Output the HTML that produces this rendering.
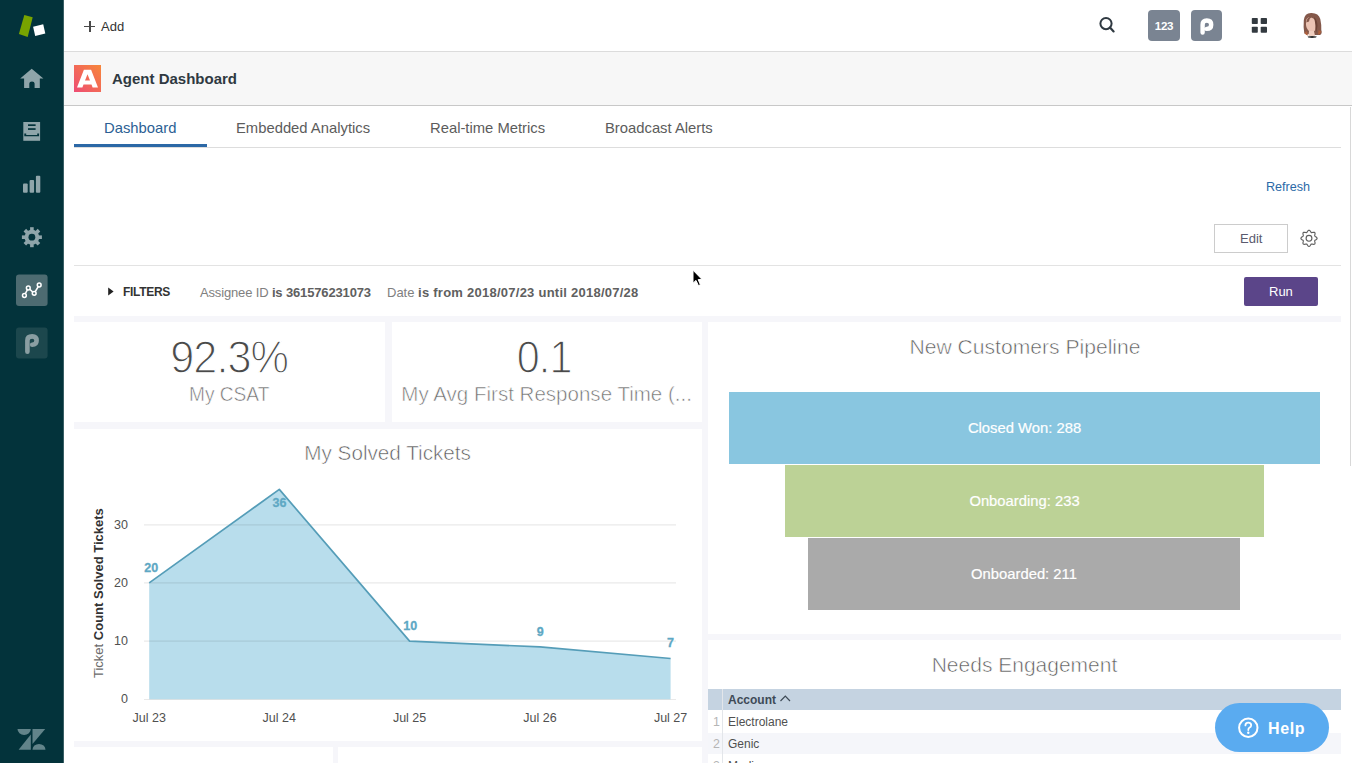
<!DOCTYPE html>
<html><head><meta charset="utf-8">
<style>
*{margin:0;padding:0;box-sizing:border-box}
html,body{width:1352px;height:763px;overflow:hidden;background:#fff;font-family:"Liberation Sans",sans-serif;position:relative}
.a{position:absolute;white-space:nowrap}
#side{left:0;top:0;width:64px;height:763px;background:#03333b}
#topbar{left:64px;top:0;width:1288px;height:52px;background:#fff;border-bottom:1px solid #dcdcdc}
#hdr{left:64px;top:52px;width:1288px;height:54px;background:#f7f7f7;border-bottom:1px solid #c8c8c8}
.tab{top:119.5px;font-size:14.8px;color:#5c5c5c}
.gap{background:#f6f6fa}
.tile{background:#fff}
.bl{font-size:14.8px;color:#fff;text-align:center;letter-spacing:0px;-webkit-text-stroke:0.2px #fff;margin-top:1px}
.ttl{font-size:21px;color:#777;text-align:center;-webkit-text-stroke:0.6px #fff}
.kpi{-webkit-text-stroke:1.3px #fff}
.ttl span,.kpi span{display:inline-block;transform-origin:50% 50%}
</style></head><body>
<!-- sidebar -->
<div id="side" class="a"></div><div class="a" style="left:63px;top:0;width:1px;height:763px;background:#3a5f65"></div>
<!-- sidebar icons -->
<svg class="a" style="left:0;top:0" width="64" height="400" viewBox="0 0 64 400">
 <polygon points="24.3,15.1 32.7,17.2 27.7,36.9 18.9,34" fill="#78a300"/>
 <polygon points="33.1,26.8 43.2,24.3 45.3,33.6 35.2,36.1" fill="#fff"/>
 <!-- home -->
 <path d="M31.7,68.8 L43.4,78.6 L39.8,78.6 L39.8,88 L34.6,88 L34.6,83.5 Q34.6,81.6 32,81.6 Q29.3,81.6 29.3,83.5 L29.3,88 L24.1,88 L24.1,78.6 L20.2,78.6 Z" fill="#8fa5aa"/>
 <!-- views -->
 <rect x="23.3" y="122" width="16.8" height="18.8" fill="#8fa5aa"/>
 <rect x="28" y="124.3" width="7.6" height="1.7" fill="#03333b"/>
 <rect x="28" y="128.2" width="7.6" height="1.7" fill="#03333b"/>
 <path d="M24.3,133.4 L26.2,133.4 L26.2,135 L37.2,135 L37.2,133.4 L39.1,133.4 L39.1,136.3 L24.3,136.3 Z" fill="#03333b"/>
 <!-- reports -->
 <rect x="23" y="183.4" width="4.7" height="9.4" rx="1" fill="#8fa5aa"/>
 <rect x="29.6" y="180" width="4.5" height="12.8" rx="1" fill="#8fa5aa"/>
 <rect x="35.9" y="175.8" width="4.4" height="17" rx="1" fill="#8fa5aa"/>
 <!-- gear -->
 <g transform="translate(31.9,237.2)" fill="#8fa5aa">
  <circle r="7.4"/>
  <g id="teeth"><rect x="-1.8" y="-10" width="3.6" height="4" /></g>
  <rect x="-1.8" y="-10" width="3.6" height="4" transform="rotate(45)"/>
  <rect x="-1.8" y="-10" width="3.6" height="4" transform="rotate(90)"/>
  <rect x="-1.8" y="-10" width="3.6" height="4" transform="rotate(135)"/>
  <rect x="-1.8" y="-10" width="3.6" height="4" transform="rotate(180)"/>
  <rect x="-1.8" y="-10" width="3.6" height="4" transform="rotate(225)"/>
  <rect x="-1.8" y="-10" width="3.6" height="4" transform="rotate(270)"/>
  <rect x="-1.8" y="-10" width="3.6" height="4" transform="rotate(315)"/>
  <circle r="3.4" fill="#03333b"/>
 </g>
 <!-- active analytics -->
 <rect x="16" y="274.5" width="31.6" height="31.5" rx="3" fill="#4d6b71"/>
 <polyline points="24.4,295.5 28.3,288 34.2,293.3 39.2,285" fill="none" stroke="#fff" stroke-width="1.6"/>
 <circle cx="24.4" cy="295.5" r="1.9" fill="#4d6b71" stroke="#fff" stroke-width="1.5"/>
 <circle cx="28.3" cy="288" r="1.9" fill="#4d6b71" stroke="#fff" stroke-width="1.5"/>
 <circle cx="34.2" cy="293.3" r="1.9" fill="#4d6b71" stroke="#fff" stroke-width="1.5"/>
 <circle cx="39.2" cy="285" r="1.9" fill="#4d6b71" stroke="#fff" stroke-width="1.5"/>
 <!-- P app -->
 <rect x="16" y="327.6" width="31.6" height="31" rx="3" fill="#1c474d"/>
 <path d="M27.4,351.8 L27.4,340.4 Q27.4,336.4 32.2,336.4 Q36.6,336.4 36.6,340.6 Q36.6,344.8 32.2,344.8" fill="none" stroke="#8a9ea2" stroke-width="4.6" stroke-linecap="round"/>
 <circle cx="31.8" cy="340.3" r="1.2" fill="#1c474d"/>
 
</svg>
<svg class="a" style="left:0;top:700px" width="64" height="63" viewBox="0 700 64 63">
 <g fill="#62848a">
  <path d="M17.5,729 L30.8,729 A6.65,6 0 0 1 17.5,729 Z"/>
  <path d="M18.6,749.7 L30.8,749.7 L30.8,734.6 Z"/>
  <path d="M32.5,729 L45.2,729 L32.5,744 Z"/>
  <path d="M32.5,749.7 L45.5,749.7 A6.5,5.8 0 0 0 32.5,749.7 Z"/>
 </g>
</svg>

<div id="topbar" class="a"></div>
<div id="hdr" class="a"></div>

<!-- Add -->
<div class="a" style="left:84.4px;top:25.8px;width:10.8px;height:1.5px;background:#4a4a4a"></div>
<div class="a" style="left:89px;top:21.2px;width:1.5px;height:10.6px;background:#4a4a4a"></div>
<div class="a" style="left:101px;top:18.5px;font-size:13px;color:#333">Add</div>

<!-- Agent Dashboard -->
<div class="a" style="left:74px;top:65px;width:27px;height:27px;background:linear-gradient(45deg,#ee4c74,#f7873a)"></div>
<div class="a" style="left:112px;top:70px;font-size:15px;font-weight:bold;color:#2f3941">Agent Dashboard</div>


<!-- A logo letter -->
<svg class="a" style="left:74px;top:65px" width="27" height="27" viewBox="0 0 27 27">
 <path d="M9.9,4.8 L17.1,4.8 L24,22.6 L18.6,22.6 L17.5,19.4 L9.5,19.4 L8.4,22.6 L3,22.6 Z M13.5,9.3 L11,15.6 L16,15.6 Z" fill="#fff" fill-rule="evenodd"/>
</svg>
<!-- top right icons -->
<svg class="a" style="left:1095px;top:14px" width="24" height="22" viewBox="0 0 24 22">
 <circle cx="11" cy="9.6" r="5.6" fill="none" stroke="#2f3941" stroke-width="2"/>
 <line x1="15" y1="13.6" x2="18.6" y2="17.4" stroke="#2f3941" stroke-width="2.2" stroke-linecap="round"/>
</svg>
<div class="a" style="left:1148px;top:10px;width:32px;height:31px;background:#7a8492;border-radius:4px"></div>
<div class="a" style="left:1148px;top:19px;width:32px;text-align:center;font-size:11.6px;font-weight:bold;color:#fff;letter-spacing:-0.3px">123</div>
<div class="a" style="left:1191px;top:10px;width:31px;height:31px;background:#7a8492;border-radius:4px"></div>
<svg class="a" style="left:1191px;top:10px" width="31" height="31" viewBox="0 0 31 31">
 <path d="M11.6,22.6 L11.6,14.8 Q11.6,10.5 15.8,10.5 Q20.2,10.5 20.2,14.7 Q20.2,18.9 15.8,18.9" fill="none" stroke="#fff" stroke-width="4.4" stroke-linecap="round"/>
 <circle cx="15.2" cy="14.4" r="1.1" fill="#7a8492"/>
</svg>
<svg class="a" style="left:1250px;top:16px" width="20" height="20" viewBox="0 0 20 20">
 <rect x="1.8" y="2" width="6" height="6" rx="0.8" fill="#333a40"/>
 <rect x="10.7" y="2" width="6.3" height="6" rx="0.8" fill="#333a40"/>
 <rect x="1.8" y="10.8" width="6" height="6" rx="0.8" fill="#333a40"/>
 <rect x="10.7" y="10.8" width="6.3" height="6" rx="0.8" fill="#333a40"/>
</svg>
<svg class="a" style="left:1296px;top:8px" width="34" height="34" viewBox="1296 8 34 34">
 <path d="M1304.3,33.5 Q1303.2,27 1303.8,20 Q1304.6,13 1311,12.9 Q1318.5,12.6 1320.3,19 Q1321.6,25 1321.3,30 Q1322.6,33.6 1320,35 L1313,35 Z" fill="#84584a"/>
 <path d="M1306,22 Q1306,17.4 1310,17.2 Q1314,17.6 1315.4,21 Q1316,27 1315,30.6 Q1312.6,32.6 1310.4,32 Q1306.4,29.6 1306,25 Z" fill="#ebc3b3"/>
 <path d="M1309,31 L1314,31 L1315,36 L1308.5,36 Z" fill="#f0cfc0"/>
 <path d="M1306.2,22.6 Q1307,16.2 1312,16.4 Q1309.6,18 1309,21.4 Z" fill="#84584a"/>
 <path d="M1314,17 Q1317.5,20 1317.5,26 L1316.2,33 Q1315.8,24 1314,17 Z" fill="#6d4336"/>
 <path d="M1307.6,36.4 Q1312,35.4 1316.8,36.4 L1316,37.6 Q1312,38.2 1308.2,37.6 Z" fill="#2b2b2b"/>
 <path d="M1304.4,33 Q1306,35.6 1308,35.4 L1307,31 Z M1318,34.6 Q1320.6,34.2 1321.2,31.5 L1318.6,30 Z" fill="#b0603d"/>
</svg>
<!-- gear outline -->
<svg class="a" style="left:1298px;top:227px" width="22" height="22" viewBox="0 0 22 22">
 <path d="M11.00,3.20 L11.52,3.34 L12.00,3.74 L12.39,4.29 L12.73,4.85 L13.03,5.31 L13.37,5.57 L13.80,5.63 L14.34,5.52 L14.97,5.35 L15.64,5.25 L16.26,5.31 L16.73,5.57 L16.99,6.04 L17.05,6.66 L16.95,7.33 L16.78,7.96 L16.67,8.50 L16.73,8.93 L16.99,9.27 L17.45,9.57 L18.01,9.91 L18.56,10.30 L18.96,10.78 L19.10,11.30 L18.96,11.82 L18.56,12.30 L18.01,12.69 L17.45,13.03 L16.99,13.33 L16.73,13.67 L16.67,14.10 L16.78,14.64 L16.95,15.27 L17.05,15.94 L16.99,16.56 L16.73,17.03 L16.26,17.29 L15.64,17.35 L14.97,17.25 L14.34,17.08 L13.80,16.97 L13.37,17.03 L13.03,17.29 L12.73,17.75 L12.39,18.31 L12.00,18.86 L11.52,19.26 L11.00,19.40 L10.48,19.26 L10.00,18.86 L9.61,18.31 L9.27,17.75 L8.97,17.29 L8.63,17.03 L8.20,16.97 L7.66,17.08 L7.03,17.25 L6.36,17.35 L5.74,17.29 L5.27,17.03 L5.01,16.56 L4.95,15.94 L5.05,15.27 L5.22,14.64 L5.33,14.10 L5.27,13.67 L5.01,13.33 L4.55,13.03 L3.99,12.69 L3.44,12.30 L3.04,11.82 L2.90,11.30 L3.04,10.78 L3.44,10.30 L3.99,9.91 L4.55,9.57 L5.01,9.27 L5.27,8.93 L5.33,8.50 L5.22,7.96 L5.05,7.33 L4.95,6.66 L5.01,6.04 L5.27,5.57 L5.74,5.31 L6.36,5.25 L7.03,5.35 L7.66,5.52 L8.20,5.63 L8.63,5.57 L8.97,5.31 L9.27,4.85 L9.61,4.29 L10.00,3.74 L10.48,3.34 Z" fill="none" stroke="#606060" stroke-width="1.15" stroke-linejoin="round"/>
 <circle cx="11" cy="11.3" r="2.9" fill="none" stroke="#606060" stroke-width="1.15"/>
</svg>
<!-- filters -->
<svg class="a" style="left:106px;top:286px" width="10" height="10" viewBox="0 0 10 10"><path d="M2.2,1.4 L7.6,5.4 L2.2,9.4 Z" fill="#222"/></svg>
<div class="a" style="left:123px;top:285px;font-size:12px;font-weight:bold;color:#333;letter-spacing:-0.3px">FILTERS</div>
<div class="a" style="left:200px;top:284.5px;font-size:13px;color:#808080;letter-spacing:-0.15px">Assignee ID <b style="color:#606060">is 361576231073</b></div>
<div class="a" style="left:387px;top:284.5px;font-size:13px;color:#808080">Date <b style="color:#606060;letter-spacing:0.25px">is from 2018/07/23 until 2018/07/28</b></div>
<!-- cursor -->
<svg class="a" style="left:690px;top:268px" width="16" height="22" viewBox="0 0 16 22">
 <path d="M3,2.2 L3,15.2 L6,12.4 L8.4,17.6 L10.4,16.8 L8.2,11.6 L12,11.4 Z" fill="#000" stroke="#fff" stroke-width="1"/>
</svg>

<div class="a" style="left:1350px;top:107px;width:1px;height:359px;background:#d8d8d8"></div>
<!-- tabs -->
<div class="a" style="left:74px;top:147px;width:1267px;height:1px;background:#ddd"></div>
<div class="a" style="left:74px;top:144px;width:133px;height:3px;background:#2c68a6"></div>
<div class="a tab" style="left:104px;color:#2c5f94">Dashboard</div>
<div class="a tab" style="left:236px">Embedded Analytics</div>
<div class="a tab" style="left:430px">Real-time Metrics</div>
<div class="a tab" style="left:605px">Broadcast Alerts</div>

<div class="a" style="left:1266px;top:180px;font-size:12.6px;color:#2c6aa8">Refresh</div>
<div class="a" style="left:1214px;top:224px;width:74px;height:29px;border:1px solid #ccc;background:#fff"></div>
<div class="a" style="left:1240px;top:231px;font-size:13px;color:#5a5a6e">Edit</div>

<div class="a" style="left:74px;top:265px;width:1267px;height:1px;background:#e3e3e3"></div>

<div class="a" style="left:1244px;top:277px;width:74px;height:29px;background:#5b4589;border-radius:2px"></div>
<div class="a" style="left:1269px;top:284px;font-size:13px;color:#fff">Run</div>

<!-- dashboard grid bg -->
<div class="a gap" style="left:74px;top:316px;width:1267px;height:447px"></div>
<div class="a tile" style="left:74px;top:322px;width:311px;height:100px"></div>
<div class="a tile" style="left:392px;top:322px;width:310px;height:100px"></div>
<div class="a tile" style="left:74px;top:429px;width:628px;height:312px"></div>
<div class="a tile" style="left:708px;top:322px;width:633px;height:312px"></div>
<div class="a tile" style="left:708px;top:640px;width:633px;height:123px"></div>
<div class="a tile" style="left:74px;top:747px;width:259px;height:16px"></div>
<div class="a tile" style="left:338px;top:747px;width:364px;height:16px"></div>


<!-- KPI -->
<div class="a kpi" style="left:74px;top:329px;width:311px;text-align:center;font-size:47px;color:#4a4a4a;letter-spacing:-1px"><span style="transform:scaleX(0.92)">92.3%</span></div>
<div class="a ttl" style="left:74px;top:382px;width:311px;color:#707070"><span style="transform:scaleX(0.91)">My CSAT</span></div>
<div class="a kpi" style="left:392px;top:329px;width:310px;text-align:center;font-size:47px;color:#4a4a4a;letter-spacing:-1px"><span style="transform:scaleX(0.88);margin-left:-6px">0.1</span></div>
<div class="a ttl" style="left:392px;top:382px;width:310px;color:#707070"><span style="transform:scaleX(0.978)">My Avg First Response Time (...</span></div>
<!-- chart -->
<div class="a ttl" style="left:74px;top:440.5px;width:628px;color:#5a5a5a"><span style="transform:scaleX(0.985)">My Solved Tickets</span></div>
<svg class="a" style="left:74px;top:429px" width="628" height="312" viewBox="74 429 628 312">
 <path d="M149.2,582.9 L279.3,489.4 L409.6,641.1 L540,646.9 L670.6,658.5 L670.6,699.2 L149.2,699.2 Z" fill="#b8ddec"/>
 <g stroke="#000" stroke-opacity="0.085" stroke-width="1.2">
  <line x1="144" y1="524.8" x2="676" y2="524.8"/>
  <line x1="144" y1="582.9" x2="676" y2="582.9"/>
  <line x1="144" y1="641.1" x2="676" y2="641.1"/>
  <line x1="144" y1="699.5" x2="676" y2="699.5"/>
 </g>
 <polyline points="149.2,582.9 279.3,489.4 409.6,641.1 540,646.9 670.6,658.5" fill="none" stroke="#559db8" stroke-width="1.7" stroke-linejoin="round"/>
 <g font-family="Liberation Sans" font-size="12.5" fill="#505050" text-anchor="end">
  <text x="128" y="528.8">30</text>
  <text x="128" y="587">20</text>
  <text x="128" y="645.2">10</text>
  <text x="128" y="703.4">0</text>
 </g>
 <g font-family="Liberation Sans" font-size="12.5" fill="#505050" text-anchor="middle">
  <text x="149.2" y="722">Jul 23</text>
  <text x="279.3" y="722">Jul 24</text>
  <text x="409.6" y="722">Jul 25</text>
  <text x="540" y="722">Jul 26</text>
  <text x="670.6" y="722">Jul 27</text>
 </g>
 <g font-family="Liberation Sans" font-size="12.5" font-weight="bold" fill="#5ea8c4" stroke="#5ea8c4" stroke-width="0.3" text-anchor="middle">
  <text x="151.2" y="572">20</text>
  <text x="279.4" y="507">36</text>
  <text x="410.2" y="630.3">10</text>
  <text x="540.3" y="635.5">9</text>
  <text x="670.5" y="647.3">7</text>
 </g>
 <text transform="translate(102.6,678) rotate(-90)" font-family="Liberation Sans" font-size="13" fill="#6a6a6a">Ticket <tspan font-weight="bold" fill="#333">Count Solved Tickets</tspan></text>
</svg>
<!-- pipeline -->
<div class="a ttl" style="left:708px;top:335px;width:633px;color:#5a5a5a"><span style="transform:scaleX(1.005)">New Customers Pipeline</span></div>
<div class="a" style="left:729px;top:392px;width:591px;height:72px;background:#89c6e0"></div>
<div class="a" style="left:785px;top:465px;width:479px;height:72px;background:#bcd296"></div>
<div class="a" style="left:808px;top:538px;width:432px;height:72px;background:#aaaaaa"></div>
<div class="a bl" style="left:729px;top:419px;width:591px">Closed Won: 288</div>
<div class="a bl" style="left:785px;top:492px;width:479px">Onboarding: 233</div>
<div class="a bl" style="left:808px;top:565px;width:432px">Onboarded: 211</div>
<!-- table -->
<div class="a ttl" style="left:708px;top:652.5px;width:633px;color:#5a5a5a"><span>Needs Engagement</span></div>
<div class="a" style="left:708px;top:689px;width:633px;height:21px;background:#c5d3e1"></div>
<div class="a" style="left:708px;top:733px;width:633px;height:21px;background:#f5f6fa"></div>
<div class="a" style="left:722px;top:689px;width:1px;height:74px;background:#e3e6ea"></div>
<div class="a" style="left:728px;top:692.5px;font-size:12px;font-weight:bold;color:#3e4a56">Account</div>
<svg class="a" style="left:779px;top:692px" width="13" height="12" viewBox="0 0 13 12"><polyline points="1.5,9 6.3,4 11,9" fill="none" stroke="#3e4a56" stroke-width="1.2"/></svg>
<div class="a" style="left:713px;top:715px;font-size:12.4px;color:#b5b5b5">1</div>
<div class="a" style="left:728px;top:715px;font-size:12px;color:#505050">Electrolane</div>
<div class="a" style="left:713px;top:737px;font-size:12.4px;color:#b5b5b5">2</div>
<div class="a" style="left:728px;top:737px;font-size:12px;color:#505050">Genic</div>
<div class="a" style="left:713px;top:759px;font-size:12.4px;color:#b5b5b5">3</div>
<div class="a" style="left:728px;top:759px;font-size:12px;color:#505050">Medi</div>
<!-- help -->
<div class="a" style="left:1215px;top:703px;width:114px;height:49px;border-radius:25px;background:#5aabf0"></div>
<svg class="a" style="left:1236px;top:716px" width="24" height="24" viewBox="0 0 24 24">
 <circle cx="12.3" cy="11.7" r="9.2" fill="none" stroke="#fff" stroke-width="2"/>
 <path d="M9.4,9.4 Q9.4,6.6 12.3,6.6 Q15.2,6.6 15.2,9.2 Q15.2,10.8 13.3,11.8 Q12.3,12.4 12.3,14" fill="none" stroke="#fff" stroke-width="1.8" stroke-linecap="round"/>
 <circle cx="12.3" cy="16.8" r="1.2" fill="#fff"/>
</svg>
<div class="a" style="left:1268px;top:720px;font-size:16px;font-weight:bold;color:#fff;letter-spacing:0.6px">Help</div>

</body></html>
